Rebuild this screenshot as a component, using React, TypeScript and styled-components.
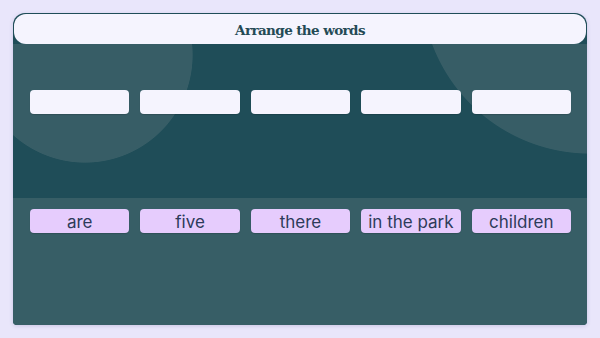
import React from "react";
import styled, { createGlobalStyle } from "styled-components";

const Global = createGlobalStyle`
  html, body { margin: 0; padding: 0; background: #e9e6fb; }
  body { width: 600px; height: 338px; overflow: hidden; }
`;

const Page = styled.div`
  box-sizing: border-box;
  width: 600px;
  height: 338px;
  padding: 13px 13px 13px 13px;
  background: #e9e6fb;
`;

const Card = styled.div`
  display: flex;
  flex-direction: column;
  width: 574px;
  height: 312px;
  background: #1f4d58;
  border-radius: 12px 12px 4px 4px;
  overflow: hidden;
  box-shadow: 0 1px 4px rgba(60, 50, 120, 0.18);
`;

const Header = styled.div`
  margin: 1px 1px 0 1px;
  height: 30px;
  flex: none;
  display: flex;
  align-items: center;
  justify-content: center;
  padding-top: 1px;
  box-sizing: border-box;
  background: #f5f4fe;
  border-radius: 12px;
  position: relative;
  z-index: 1;
  font-family: "DejaVu Serif", "Liberation Serif", serif;
  font-weight: 700;
  font-size: 13.5px;
  color: #244a55;
  letter-spacing: -0.6px;
`;

const TopPanel = styled.div`
  height: 154px;
  flex: none;
  box-sizing: border-box;
  padding: 46px 16px 0 17px;
  background:
    radial-gradient(circle 108px at 72px 11px, #375d66 99.3%, transparent 100%),
    radial-gradient(circle 169px at 577px -59px, #375d66 99.5%, transparent 100%),
    #1f4d58;
`;

const BottomPanel = styled.div`
  flex: 1;
  box-sizing: border-box;
  padding: 11px 16px 0 17px;
  background: #375e66;
`;

const Row = styled.div`
  display: grid;
  grid-template-columns: repeat(5, 1fr);
  column-gap: 11px;
`;

const Slot = styled.div`
  height: 24px;
  background: #f5f4fe;
  border-radius: 4px;
  box-shadow: 0 1px 1px rgba(0, 0, 0, 0.15);
`;

const Chip = styled.div`
  height: 24px;
  box-sizing: border-box;
  padding-top: 2px;
  display: flex;
  align-items: center;
  justify-content: center;
  background: #e6ccfd;
  border-radius: 4px;
  box-shadow: 0 1px 1px rgba(0, 0, 0, 0.15);
  font-family: Inter, "Noto Sans", sans-serif;
  font-size: 17px;
  color: #2d3b5a;
  white-space: nowrap;
`;

const words = ["are", "five", "there", "in the park", "children"];

export default function App() {
  return (
    <>
      <Global />
      <Page>
        <Card>
          <Header>Arrange the words</Header>
          <TopPanel>
            <Row>
              {words.map((w) => (
                <Slot key={w} />
              ))}
            </Row>
          </TopPanel>
          <BottomPanel>
            <Row>
              {words.map((w) => (
                <Chip key={w}>{w}</Chip>
              ))}
            </Row>
          </BottomPanel>
        </Card>
      </Page>
    </>
  );
}
